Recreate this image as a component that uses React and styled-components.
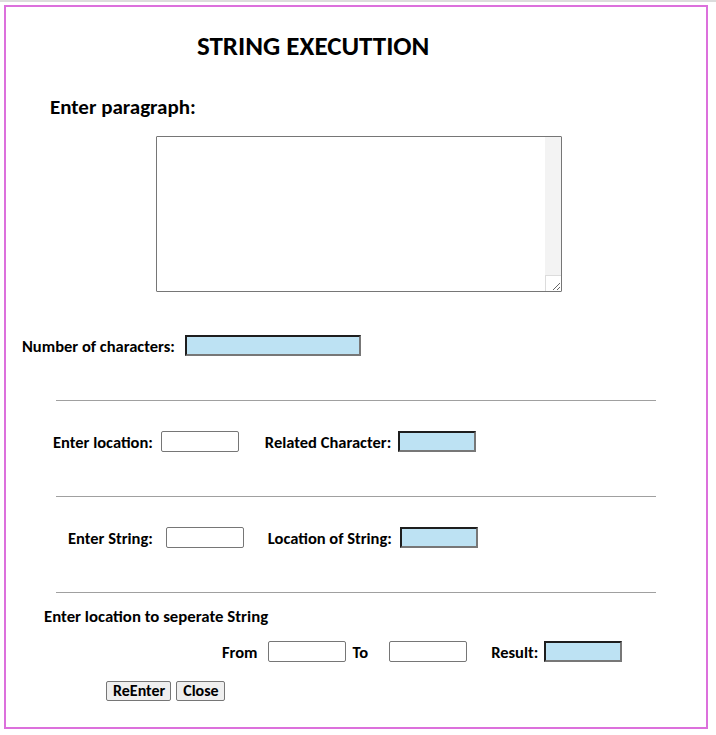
import React from 'react'
import styled, { createGlobalStyle } from 'styled-components'

const GlobalStyle = createGlobalStyle`
  html, body {
    margin: 0;
    padding: 0;
    background: #fff;
  }
  body {
    border-top: 2px solid #dcdcdc;
    font-family: Carlito, "Liberation Sans Narrow", Roboto, sans-serif;
    font-weight: bold;
    color: #000;
  }
`

function App() {
  return (
    <>
      <GlobalStyle />
      <Frame>
        <Title>STRING EXECUTTION</Title>
        <SubTitle>Enter paragraph:</SubTitle>
        <TextArea />

        <CountRow>
          <Label>Number of characters:</Label>
          <Output width="176px" gap="10px" />
        </CountRow>

        <Rule />
        <Row indent="47px">
          <Label>Enter location:</Label>
          <Field gap="8px" />
          <Label gap="26px">Related Character:</Label>
          <Output />
        </Row>

        <Rule />
        <Row indent="62px">
          <Label>Enter String:</Label>
          <Field gap="13px" />
          <Label gap="24px">Location of String:</Label>
          <Output gap="8px" />
        </Row>

        <Rule />
        <Caption>Enter location to seperate String</Caption>
        <Row indent="216px" top="14px">
          <Label>From</Label>
          <Field gap="10px" />
          <Label gap="7px">To</Label>
          <Field gap="21px" />
          <Label gap="24px">Result:</Label>
          <Output gap="6px" />
        </Row>

        <Buttons>
          <Button>ReEnter</Button>
          <Button>Close</Button>
        </Buttons>
      </Frame>
    </>
  )
}

export default App

const Frame = styled.div`
  box-sizing: border-box;
  width: 704px;
  height: 724px;
  margin: 3px 0 0 4px;
  border: 2px solid #dc70dc;
  display: flex;
  flex-direction: column;
`

const Title = styled.h1`
  margin: 24px 0 0 191px;
  font-size: 27px;
  line-height: 30px;
  font-weight: bold;
`

const SubTitle = styled.h2`
  margin: 34px 0 0 44px;
  font-size: 21px;
  line-height: 24px;
  font-weight: bold;
`

const TextArea = styled.textarea`
  box-sizing: border-box;
  width: 406px;
  height: 156px;
  margin: 17px 0 0 150px;
  border: 1px solid #767676;
  border-radius: 1px;
  resize: both;
  font-family: inherit;
  padding: 2px;
  background:
    linear-gradient(#dcdcdc, #dcdcdc) right 0 bottom 15px / 16px 1px no-repeat,
    linear-gradient(#dcdcdc, #dcdcdc) right 15px bottom 0 / 1px 16px no-repeat,
    linear-gradient(#f3f3f3, #f3f3f3) right top / 16px calc(100% - 16px) no-repeat,
    #fff;
`

const CountRow = styled.div`
  display: flex;
  align-items: center;
  margin: 43px 0 0 16px;
`

const Row = styled.div`
  display: flex;
  align-items: center;
  margin: ${p => p.top || '30px'} 0 0 ${p => p.indent};
`

const Label = styled.span`
  font-size: 16.5px;
  line-height: 20px;
  margin-left: ${p => p.gap || '0'};
  white-space: nowrap;
`

const Field = styled.input`
  box-sizing: border-box;
  width: 78px;
  height: 21px;
  margin: 0 0 0 ${p => p.gap || '7px'};
  border: 1px solid #767676;
  border-radius: 2px;
  background: #fff;
  padding: 0;
`

const Output = styled.input.attrs({ readOnly: true })`
  box-sizing: border-box;
  width: ${p => p.width || '78px'};
  height: 21px;
  margin: 0 0 0 ${p => p.gap || '7px'};
  border: 2px solid;
  border-color: #1e1e1e #777 #777 #1e1e1e;
  background: #bde2f3;
  padding: 0;
`

const Rule = styled.hr`
  width: 600px;
  margin: 44px 0 0 50px;
  border: 0;
  border-top: 1px solid #a0a0a0;
  height: 0;
`

const Caption = styled.div`
  margin: 14px 0 0 38px;
  font-size: 16.8px;
  line-height: 20px;
`

const Buttons = styled.div`
  display: flex;
  gap: 5px;
  margin: 19px 0 0 100px;
`

const Button = styled.button`
  font-family: inherit;
  font-weight: bold;
  font-size: 16px;
  line-height: 15px;
  padding: 1px 5px 2px 6px;
  border: 1px solid #767676;
  border-radius: 2px;
  background: #efefef;
  color: #000;
`
